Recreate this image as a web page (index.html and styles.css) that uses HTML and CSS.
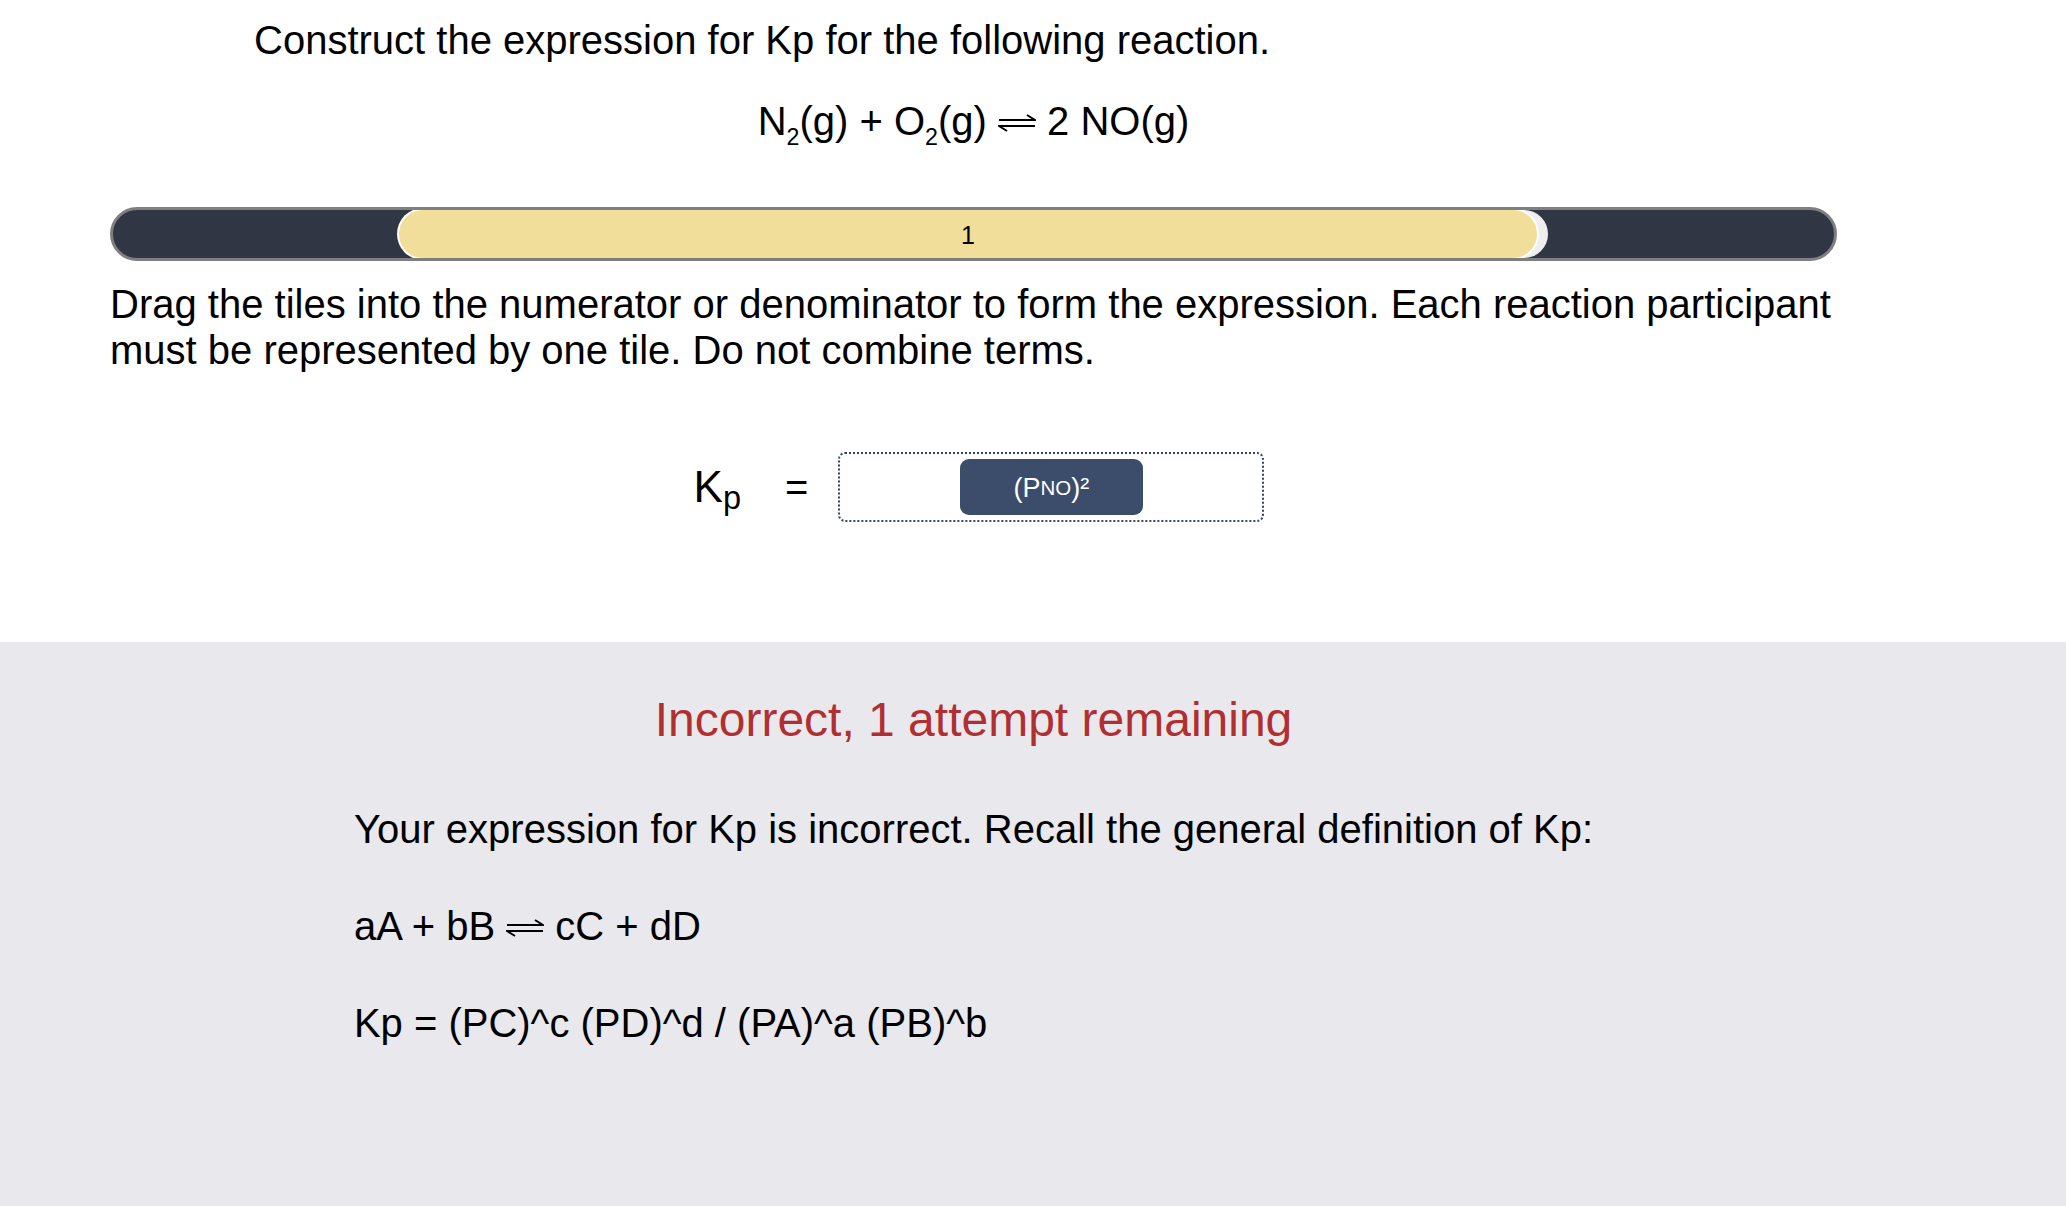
FILE: index.html
```html
<!DOCTYPE html>
<html lang="en">
<head>
<meta charset="utf-8">
<title>Construct the expression for Kp</title>
<link rel="stylesheet" href="styles.css">
</head>
<body>
  <section class="question">
    <div class="content">
      <p class="title">Construct the expression for Kp for the following reaction.</p>
      <p class="equation">N<sub>2</sub>(g) + O<sub>2</sub>(g) <svg class="eq-arrow" viewBox="0 0 38 20" width="38" height="20" aria-label="equilibrium"><path d="M1 7 H37 L29 2" /><path d="M37 13 H1 L9 18" /></svg> 2 NO(g)</p>
      <div class="track">
        <div class="range">1</div>
      </div>
      <p class="instructions">Drag the tiles into the numerator or denominator to form the expression. Each reaction participant must be represented by one tile. Do not combine terms.</p>
      <div class="kp-row">
        <span class="kp">K<sub>p</sub></span>
        <span class="equals">=</span>
        <div class="dropzone">
          <div class="tile">(P<sub>NO</sub>)²</div>
        </div>
      </div>
    </div>
  </section>
  <section class="feedback">
    <div class="content">
      <p class="status">Incorrect, 1 attempt remaining</p>
      <div class="feedback-body">
        <p>Your expression for Kp is incorrect. Recall the general definition of Kp:</p>
        <p>aA + bB <svg class="eq-arrow" viewBox="0 0 38 20" width="38" height="20" aria-label="equilibrium"><path d="M1 7 H37 L29 2" /><path d="M37 13 H1 L9 18" /></svg> cC + dD</p>
        <p>Kp = (PC)^c (PD)^d / (PA)^a (PB)^b</p>
      </div>
    </div>
  </section>
</body>
</html>
```

FILE: styles.css
```css
* {
  box-sizing: border-box;
}

html, body {
  margin: 0;
  padding: 0;
}

body {
  min-height: 100vh;
  display: flex;
  flex-direction: column;
  background: #ffffff;
  color: #000000;
  font-family: "Liberation Sans", Arial, Helvetica, sans-serif;
  font-size: 40px;
  line-height: 46px;
}

p {
  margin: 0;
}

.content {
  margin-left: 110px;
  width: 1727px;
}

.question {
  padding-top: 17px;
  padding-bottom: 120px;
}

.title {
  padding-left: 144px;
}

.equation {
  margin-top: 35px;
  text-align: center;
}

.equation sub {
  font-size: 0.58em;
  line-height: 0;
  vertical-align: -0.45em;
}

.eq-arrow {
  vertical-align: 2px;
  fill: none;
  stroke: #000000;
  stroke-width: 2;
  stroke-linecap: butt;
  stroke-linejoin: miter;
}

.track {
  margin-top: 63px;
  height: 54px;
  border: 3px solid #7f7f7f;
  border-radius: 27px;
  background: #313645;
  overflow: hidden;
  display: flex;
  padding-left: 286px;
}

.range {
  width: 1138px;
  height: 100%;
  border-radius: 24px;
  background: #f2de9b;
  box-shadow: 0 0 0 2px #ffffff, 11px 0 0 0 #eeeeee;
  display: flex;
  align-items: center;
  justify-content: center;
  font-size: 25px;
  line-height: 1;
  padding-top: 2px;
  color: #000000;
}

.instructions {
  margin-top: 20px;
}

.kp-row {
  margin-top: 79px;
  display: flex;
  align-items: center;
  justify-content: center;
  padding-left: 11px;
}

.kp {
  font-size: 44px;
  line-height: 1;
}

.kp sub {
  font-size: 0.74em;
  line-height: 0;
  vertical-align: -0.2em;
}

.equals {
  margin-left: 44px;
  font-size: 40px;
  line-height: 1;
}

.dropzone {
  margin-left: 30px;
  width: 426px;
  height: 70px;
  border: 2px dotted #33456a;
  border-radius: 7px;
  display: flex;
  align-items: center;
  justify-content: center;
}

.tile {
  width: 183px;
  height: 56px;
  border-radius: 9px;
  background: #3c4d6c;
  color: #ffffff;
  font-size: 27px;
  line-height: 1;
  padding-top: 2px;
  display: flex;
  align-items: center;
  justify-content: center;
}

.tile sub {
  font-size: 0.76em;
  line-height: 0;
  vertical-align: -0.16em;
}

.feedback {
  flex: 1;
  background: #e9e8ed;
  padding-top: 50px;
}

.status {
  text-align: center;
  color: #b12f31;
  font-size: 48px;
  line-height: 55px;
}

.feedback-body {
  width: fit-content;
  margin: 59px auto 0;
}

.feedback-body p + p {
  margin-top: 51px;
}
```
